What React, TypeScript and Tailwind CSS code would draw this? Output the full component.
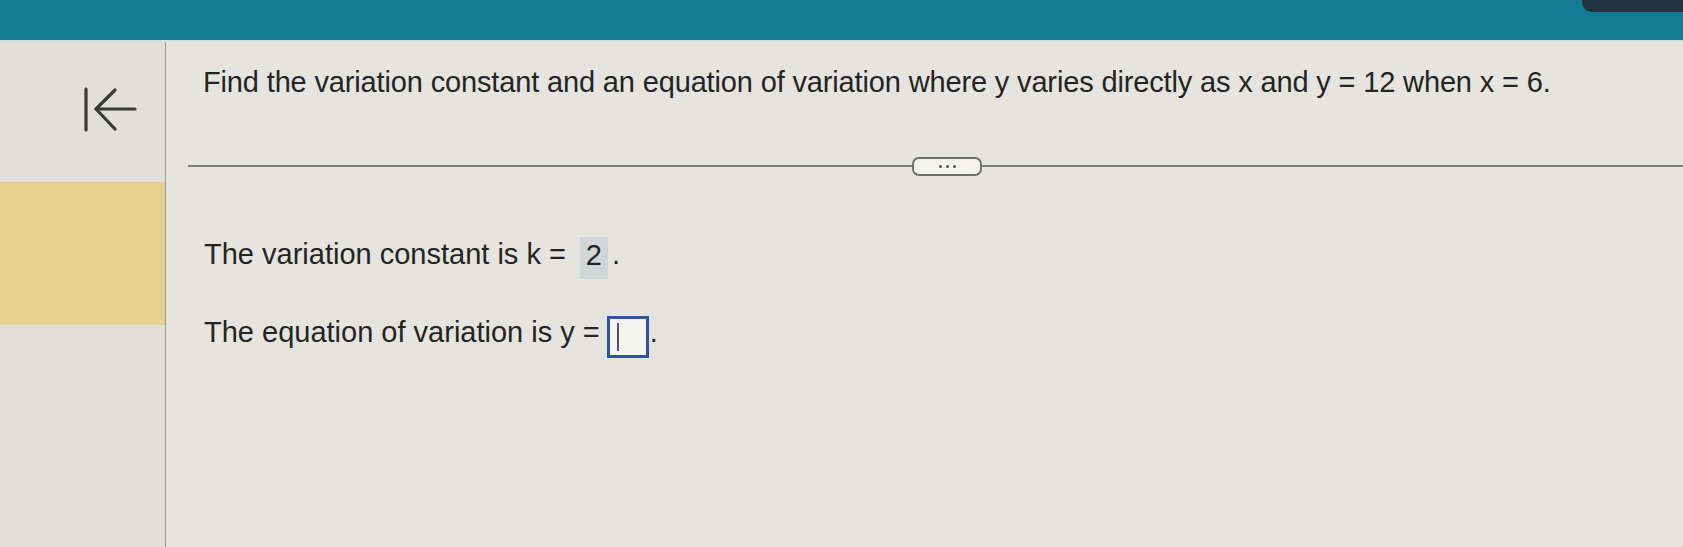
import React from "react";

export default function App() {
  return (
    <div
      className="relative flex h-[547px] w-full flex-col overflow-hidden bg-[#e6e4df] text-[#242424]"
      style={{ fontFamily: '"Liberation Sans", Arial, sans-serif' }}
    >
      {/* top teal bar */}
      <div className="relative h-[42px] w-full shrink-0 border-b-2 border-[#d9dedd] bg-[#117c94]">
        <div className="absolute right-0 top-0 h-[12px] w-[101px] rounded-bl-[10px] bg-[#23343e]" />
      </div>

      <div className="flex flex-1">
        {/* sidebar */}
        <div className="flex w-[166px] shrink-0 flex-col border-r border-[#9a9996] bg-[#e1dfda]">
          <div className="flex h-[140px] items-start pl-[83px] pt-[44px]">
            <svg width="56" height="48" viewBox="0 0 56 48" fill="none" stroke="#3a3a3a" strokeWidth="3.2" strokeLinecap="round">
              <line x1="3" y1="3" x2="3" y2="44" />
              <line x1="13" y1="23" x2="52" y2="23" />
              <polyline points="32,4 13,23 32,43" strokeLinejoin="round" />
            </svg>
          </div>
          <div className="h-[143px] bg-[#e4d18f]" />
          <div className="flex-1" />
        </div>

        {/* main */}
        <div className="flex flex-1 flex-col">
          <div className="mt-[24px] pl-[37px] text-[29px] leading-[33px] tracking-[-0.15px]">
            Find the variation constant and an equation of variation where y varies directly as x and y = 12 when x = 6.
          </div>

          <div className="mt-[57px] flex h-[20px] items-center pl-[22px]">
            <div className="h-[2px] w-[724px] bg-[#7d7d7b]" />
            <div className="flex h-[19px] w-[70px] items-center justify-center gap-[4px] rounded-[7px] border-2 border-[#6f6f6d] bg-[#f3f2ef]">
              <span className="h-[3px] w-[3px] rounded-full bg-[#555]" />
              <span className="h-[3px] w-[3px] rounded-full bg-[#555]" />
              <span className="h-[3px] w-[3px] rounded-full bg-[#555]" />
            </div>
            <div className="h-[2px] flex-1 bg-[#7d7d7b]" />
          </div>

          <div className="mt-[62px] flex h-[33px] items-center pl-[38px] text-[29px] leading-[33px]">
            <span>The variation constant is k =</span>
            <span className="ml-[14px] mt-[6px] flex h-[42px] w-[28px] items-center justify-center bg-[#d3d6d9]">
              <span className="-mt-[5px]">2</span>
            </span>
            <span className="ml-[4px]">.</span>
          </div>

          <div className="mt-[45px] flex h-[33px] items-center pl-[38px] text-[29px] leading-[33px]">
            <span>The equation of variation is y =</span>
            <span className="ml-[7px] mt-[8px] flex h-[42px] w-[42px] items-center justify-start border-[3px] border-[#2f52a3] bg-[#f4f4f2] pl-[7px]">
              <span className="h-[28px] w-[2px] bg-[#555]" />
            </span>
            <span className="ml-[1px]">.</span>
          </div>
        </div>
      </div>
    </div>
  );
}
